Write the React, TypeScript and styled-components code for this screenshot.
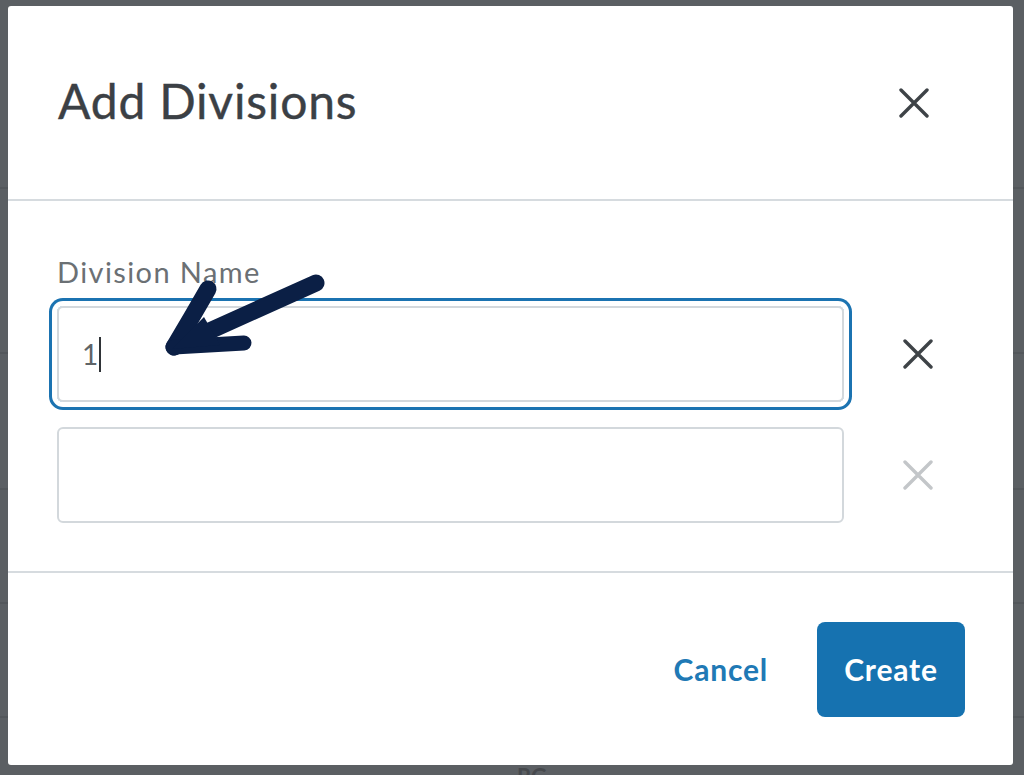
import React from 'react';
import styled, { createGlobalStyle } from 'styled-components';

const GlobalStyle = createGlobalStyle`
  html, body {
    margin: 0;
    height: 100%;
    overflow: hidden;
  }

  body {
    background-color: #5b5f63;
    font-family: Lato, 'Open Sans', sans-serif;
  }
`;

// faint rows of the table that sits behind the overlay
const rowLines = [187, 352, 488, 602, 716]
  .map((y) => `linear-gradient(#53575b, #53575b) 0 ${y}px / 100% 2px no-repeat`)
  .join(', ');

const Backdrop = styled.div`
  height: 775px;
  box-sizing: border-box;
  padding: 6px 11px 0 8px;
  display: flex;
  flex-direction: column;
  overflow: hidden;
  background: ${rowLines}, #5b5f63;
`;

const Modal = styled.section`
  position: relative;
  flex: 0 0 759px;
  display: flex;
  flex-direction: column;
  background-color: #ffffff;
  border-radius: 3px;
`;

const Header = styled.header`
  flex: 0 0 195px;
  box-sizing: border-box;
  display: flex;
  align-items: center;
  justify-content: space-between;
  padding: 0 75px 0 50px;
  border-bottom: 2px solid #d6dbdf;
`;

const Title = styled.h2`
  margin: 0;
  margin-top: -4px;
  font-size: 48px;
  font-weight: 400;
  letter-spacing: 0.8px;
  color: #3b4045;
  -webkit-text-stroke: 0.4px #3b4045;
`;

const IconButton = styled.button`
  width: 48px;
  height: 48px;
  padding: 0;
  border: 0;
  background: none;
  display: flex;
  align-items: center;
  justify-content: center;
  cursor: pointer;
`;

const Body = styled.div`
  flex: 0 0 372px;
  box-sizing: border-box;
  display: flex;
  flex-direction: column;
  padding: 56px 0 0 49px;
  border-bottom: 2px solid #d6dbdf;
`;

const Label = styled.label`
  font-size: 29px;
  line-height: 29px;
  letter-spacing: 1.4px;
  color: #6b7074;
  margin-bottom: 20px;
`;

const Rows = styled.div`
  display: flex;
  flex-direction: column;
  gap: 25px;
`;

const Row = styled.div`
  display: flex;
  align-items: center;
  gap: 50px;
`;

interface FieldProps {
  $focused?: boolean;
}

const Field = styled.div<FieldProps>`
  width: 787px;
  height: 96px;
  box-sizing: border-box;
  display: flex;
  align-items: center;
  padding-left: 23px;
  border: 2px solid #d3d8dc;
  border-radius: 6px;
  box-shadow: ${(p) => (p.$focused ? '0 0 0 5px #ffffff, 0 0 0 8px #1b73b1' : 'none')};
  font-size: 28px;
  color: #5f6468;
`;

const Caret = styled.span`
  display: inline-block;
  width: 2px;
  height: 35px;
  margin-left: 1px;
  background-color: #2f3337;
`;

const Footer = styled.footer`
  flex: 1;
  display: flex;
  align-items: center;
  justify-content: flex-end;
  gap: 49px;
  padding-right: 48px;
`;

const LinkButton = styled.button`
  padding: 0;
  border: 0;
  background: none;
  font-family: Lato, 'Open Sans', sans-serif;
  font-size: 30px;
  font-weight: 700;
  letter-spacing: 0.8px;
  color: #2079b5;
  cursor: pointer;
`;

const PrimaryButton = styled.button`
  width: 148px;
  height: 95px;
  padding: 0;
  border: 0;
  border-radius: 8px;
  background-color: #1672b0;
  font-family: Lato, 'Open Sans', sans-serif;
  font-size: 30px;
  font-weight: 700;
  letter-spacing: 0.8px;
  color: #ffffff;
  cursor: pointer;
`;

const Annotation = styled.svg`
  position: absolute;
  left: 142px;
  top: 259px;
  pointer-events: none;
`;

const Peek = styled.div`
  margin: 1px 0 0 509px;
  font-size: 22px;
  line-height: 22px;
  font-weight: 700;
  color: #46494d;
`;

const Cross: React.FC<{ color: string }> = ({ color }) => (
  <svg width="30" height="30" viewBox="0 0 30 30" fill="none">
    <path
      d="M2 2 L28 28 M28 2 L2 28"
      stroke={color}
      strokeWidth="3.4"
      strokeLinecap="round"
    />
  </svg>
);

const divisions = ['1', ''];

const App: React.FC = () => {
  return (
    <>
      <GlobalStyle />
      <Backdrop>
        <Modal>
          <Header>
            <Title>Add Divisions</Title>
            <IconButton aria-label="Close">
              <Cross color="#3e4347" />
            </IconButton>
          </Header>
          <Body>
            <Label>Division Name</Label>
            <Rows>
              {divisions.map((name, i) => (
                <Row key={i}>
                  <Field $focused={i === 0}>
                    {name}
                    {i === 0 && <Caret />}
                  </Field>
                  <IconButton aria-label="Remove division">
                    <Cross color={name ? '#3e4347' : '#c3c6c9'} />
                  </IconButton>
                </Row>
              ))}
            </Rows>
          </Body>
          <Footer>
            <LinkButton>Cancel</LinkButton>
            <PrimaryButton>Create</PrimaryButton>
          </Footer>
          {/* hand drawn arrow pointing at the field */}
          <Annotation width="180" height="100" viewBox="0 0 180 100">
            <g stroke="#0b1f45" strokeLinecap="round" strokeLinejoin="round" fill="none">
              <path d="M166 18 L24 82" strokeWidth="17" />
              <path d="M58 24 Q42 52 24 82" strokeWidth="17" />
              <path d="M24 82 L94 78" strokeWidth="15" />
            </g>
            <path d="M22 84 L54 52 L70 80 Z" fill="#0b1f45" />
          </Annotation>
        </Modal>
        <Peek>RG</Peek>
      </Backdrop>
    </>
  );
};

export default App;
